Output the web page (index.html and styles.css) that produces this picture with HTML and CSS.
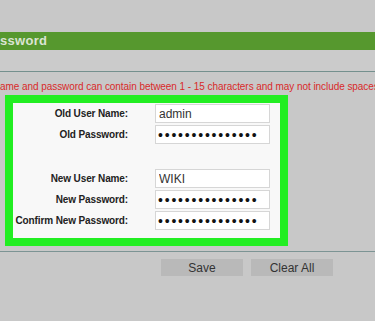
FILE: index.html
```html
<!DOCTYPE html>
<html lang="en">
<head>
    <meta charset="UTF-8">
    <meta name="viewport" content="width=device-width, initial-scale=1.0">
    <title>Password</title>
    <link rel="stylesheet" href="styles.css">
</head>
<body>
    <div class="page">
        <div class="title">ssword</div>
        <div class="band"></div>
        <div class="note">ame and password can contain between 1 - 15 characters and may not include spaces</div>

        <form class="box" autocomplete="off">
            <div class="row">
                <label class="label">Old User Name:</label>
                <input class="field" type="text" value="admin">
            </div>
            <div class="row">
                <label class="label">Old Password:</label>
                <input class="field field--pass" type="password" value="xxxxxxxxxxxxxxx">
            </div>
            <div class="spacer"></div>
            <div class="row">
                <label class="label">New User Name:</label>
                <input class="field" type="text" value="WIKI">
            </div>
            <div class="row">
                <label class="label">New Password:</label>
                <input class="field field--pass" type="password" value="xxxxxxxxxxxxxxx">
            </div>
            <div class="row">
                <label class="label">Confirm New Password:</label>
                <input class="field field--pass" type="password" value="xxxxxxxxxxxxxxx">
            </div>
        </form>

        <div class="actions">
            <button type="button" class="btn">Save</button>
            <button type="button" class="btn">Clear All</button>
        </div>
    </div>
</body>
</html>
```

FILE: styles.css
```css
* {
    margin: 0;
    padding: 0;
    box-sizing: border-box;
}

html, body {
    height: 100%;
    background: #c8c8c8;
    font-family: "Liberation Sans", Arial, sans-serif;
    overflow: hidden;
}

.page {
    padding-top: 32px;
}

.title {
    height: 18px;
    line-height: 18px;
    background: #56982e;
    color: #dbe4d4;
    font-size: 13px;
    font-weight: bold;
    letter-spacing: 0.3px;
}

.band {
    height: 22px;
    background: #cbcbcb;
    border-bottom: 1px solid #74908e;
}

.note {
    margin-top: 9px;
    height: 12px;
    line-height: 12px;
    font-size: 10px;
    letter-spacing: -0.06px;
    color: #d92a2a;
    white-space: nowrap;
}

.box {
    margin: 2px 0 0 5px;
    width: 283px;
    height: 151px;
    border: 8px solid #22ee22;
    background: #f8f8f8;
    padding-top: 1px;
    display: flex;
    flex-direction: column;
    gap: 2px;
}

.row {
    display: flex;
    align-items: center;
    height: 19px;
}

.label {
    width: 115px;
    text-align: right;
    font-size: 10px;
    font-weight: bold;
    letter-spacing: -0.12px;
    color: #222;
    white-space: nowrap;
}

.field {
    margin-left: 27px;
    width: 115px;
    height: 19px;
    border: 1px solid #d6d6d6;
    background: #fff;
    padding: 0 3px;
    font-family: "Liberation Sans", Arial, sans-serif;
    font-size: 12px;
    color: #333;
    outline: none;
}

.field--pass {
    padding-left: 2px;
    font-size: 14px;
    letter-spacing: 1.8px;
    color: #111;
}

.spacer {
    height: 21px;
}

.actions {
    margin-top: 5px;
    border-top: 1px solid #7c9494;
    padding: 7px 0 0 161px;
    display: flex;
    gap: 8px;
}

.btn {
    width: 82px;
    height: 17px;
    border: none;
    background: #b9b9b9;
    color: #333;
    font-family: "Liberation Sans", Arial, sans-serif;
    font-size: 12px;
}
```
